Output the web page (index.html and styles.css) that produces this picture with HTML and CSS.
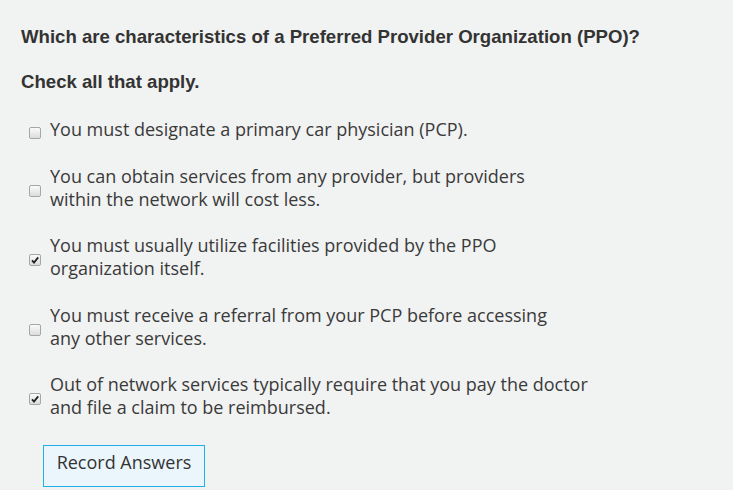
FILE: index.html
```html
<!DOCTYPE html>
<html lang="en">
<head>
<meta charset="utf-8">
<title>PPO Question</title>
<link rel="stylesheet" href="styles.css">
</head>
<body>
<div class="quiz">
  <h1 class="question">Which are characteristics of a Preferred Provider Organization (PPO)?</h1>
  <h2 class="instruction">Check all that apply.</h2>
  <ul class="options">
    <li class="option"><span class="box"></span><span class="text">You must designate a primary car physician (PCP).</span></li>
    <li class="option"><span class="box"></span><span class="text">You can obtain services from any provider, but providers<br>within the network will cost less.</span></li>
    <li class="option"><span class="box checked"><svg viewBox="0 0 12 12" width="12" height="12"><path d="M3 6.3 L5 8.6 L9.2 3.4" fill="none" stroke="#222" stroke-width="1.8"/></svg></span><span class="text">You must usually utilize facilities provided by the PPO<br>organization itself.</span></li>
    <li class="option"><span class="box"></span><span class="text">You must receive a referral from your PCP before accessing<br>any other services.</span></li>
    <li class="option"><span class="box checked"><svg viewBox="0 0 12 12" width="12" height="12"><path d="M3 6.3 L5 8.6 L9.2 3.4" fill="none" stroke="#222" stroke-width="1.8"/></svg></span><span class="text">Out of network services typically require that you pay the doctor<br>and file a claim to be reimbursed.</span></li>
  </ul>
  <button class="record" type="button">Record Answers</button>
</div>
</body>
</html>
```
FILE: styles.css
```css
html, body {
  margin: 0;
  padding: 0;
  background: #f1f2f2;
}
.quiz {
  padding: 26px 0 0 21px;
}
.question, .instruction {
  font-family: "Liberation Sans", Arial, sans-serif;
  font-weight: bold;
  font-size: 18.6px;
  line-height: 22px;
  color: #333;
  margin: 0;
}
.instruction {
  margin-top: 23px;
}
.options {
  list-style: none;
  margin: 25px 0 0 0;
  padding: 0 0 0 8px;
  display: flex;
  flex-direction: column;
  gap: 23.5px;
}
.option {
  display: flex;
  align-items: center;
  gap: 9px;
}
.box {
  flex: none;
  box-sizing: border-box;
  width: 12px;
  height: 12px;
  margin-top: 6px;
  border: 1px solid #a6a6a6;
  border-radius: 2px;
  background: linear-gradient(#fafafa, #dcdcdc);
  position: relative;
}
.box svg {
  position: absolute;
  left: -1px;
  top: -1px;
}
.text {
  font-family: "Open Sans", "Noto Sans", sans-serif;
  font-size: 18px;
  line-height: 23px;
  color: #3a3a3a;
}
.record {
  box-sizing: border-box;
  display: block;
  margin: 26px 0 0 22px;
  font-family: "Open Sans", "Noto Sans", sans-serif;
  font-size: 18px;
  line-height: 23px;
  color: #333;
  background: #eaf6fb;
  border: 1px solid #1fb0e8;
  padding: 5px 0 12px;
  width: 162px;
  height: 42px;
  text-align: center;
  border-radius: 0;
}
```
